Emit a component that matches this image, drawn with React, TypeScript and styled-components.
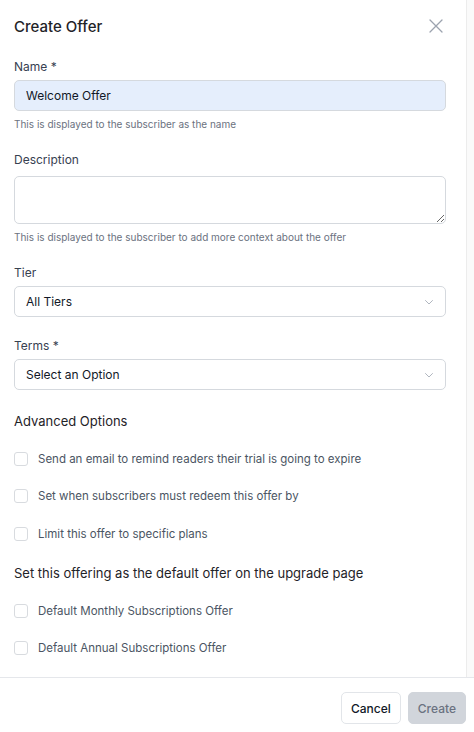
import { createGlobalStyle, styled } from "styled-components";

const GlobalStyle = createGlobalStyle`
  * { box-sizing: border-box; }
  html, body { margin: 0; padding: 0; background: #fff; }
  body {
    font-family: Inter, "Noto Sans", "Liberation Sans", sans-serif;
    color: #1f2328;
  }
`;

const Modal = styled.div`
  display: flex;
  flex-direction: column;
  width: 474px;
  height: 732px;
  background: #fff;
`;

const Main = styled.div`
  flex: 1;
  display: flex;
  min-height: 0;
`;

const Body = styled.div`
  flex: 1;
  overflow: hidden;
  padding: 14px 20px 0 14px;
`;

const ScrollTrack = styled.div`
  width: 8px;
  flex-shrink: 0;
  background: #fafafa;
  border-left: 1px solid #ececec;
`;

const Header = styled.div`
  display: flex;
  align-items: center;
  justify-content: space-between;
  height: 24px;
  margin-bottom: 21px;
`;

const Title = styled.h2`
  margin: 0;
  font-size: 15px;
  font-weight: 500;
  color: #1f2328;
`;

const CloseButton = styled.button`
  display: flex;
  align-items: center;
  justify-content: center;
  width: 24px;
  height: 24px;
  padding: 0;
  margin-right: -2px;
  border: none;
  background: none;
  color: #9ca3af;
  cursor: pointer;
`;

const Field = styled.div<{ $gap?: number }>`
  display: flex;
  flex-direction: column;
  margin-bottom: ${(p) => p.$gap ?? 21}px;
`;

const Label = styled.label`
  font-size: 12px;
  color: #374151;
  line-height: 16px;
  margin-bottom: 5px;
`;

const Input = styled.input<{ $filled?: boolean }>`
  height: 31px;
  padding: 0 11px;
  border: 1px solid #d5d9de;
  border-radius: 5px;
  background: ${(p) => (p.$filled ? "#e5eefc" : "#fff")};
  font-family: inherit;
  font-size: 12px;
  color: #111827;
  outline: none;
`;

const TextArea = styled.textarea`
  height: 48px;
  margin-top: 3px;
  padding: 8px 11px;
  border: 1px solid #d5d9de;
  border-radius: 5px;
  background: #fff;
  font-family: inherit;
  font-size: 12px;
  resize: vertical;
  outline: none;
`;

const Help = styled.p`
  margin: 6px 0 0;
  font-size: 10px;
  line-height: 14px;
  color: #6b7280;
`;

const SelectBox = styled.div`
  display: flex;
  align-items: center;
  justify-content: space-between;
  height: 31px;
  padding: 0 10px 0 11px;
  border: 1px solid #d5d9de;
  border-radius: 5px;
  background: #fff;
  font-size: 12px;
  color: #111827;
`;

const Chevron = styled.svg`
  width: 12px;
  height: 12px;
  color: #9ca3af;
`;

const SectionTitle = styled.h3`
  margin: 0 0 21px;
  font-size: 13px;
  font-weight: 400;
  line-height: 18px;
  color: #1f2328;
`;

const CheckList = styled.div`
  display: flex;
  flex-direction: column;
  gap: 21.3px;
  margin-bottom: 22px;
`;

const CheckRow = styled.label`
  display: flex;
  align-items: center;
  gap: 10px;
  font-size: 11.5px;
  line-height: 16px;
  color: #4b5563;
`;

const Box = styled.span`
  width: 14px;
  height: 14px;
  flex-shrink: 0;
  border: 1px solid #d8dbdf;
  border-radius: 3px;
  background: #fff;
`;

const Footer = styled.div`
  display: flex;
  justify-content: flex-end;
  gap: 7px;
  height: 55px;
  padding: 14px 8px 0 0;
  border-top: 1px solid #e5e7eb;
`;

const Button = styled.button<{ $primary?: boolean }>`
  height: 32px;
  padding: 0 9px;
  border-radius: 5px;
  border: 1px solid ${(p) => (p.$primary ? "#d1d5db" : "#e2e5e9")};
  background: ${(p) => (p.$primary ? "#d1d5db" : "#fff")};
  color: ${(p) => (p.$primary ? "#6b7280" : "#111827")};
  font-family: inherit;
  font-size: 12px;
  font-weight: 500;
  cursor: pointer;
`;

function ChevronDown() {
  return (
    <Chevron viewBox="0 0 24 24" fill="none" stroke="currentColor" strokeWidth="1.6">
      <path d="M5 9l7 7 7-7" strokeLinecap="round" strokeLinejoin="round" />
    </Chevron>
  );
}

const advanced = [
  "Send an email to remind readers their trial is going to expire",
  "Set when subscribers must redeem this offer by",
  "Limit this offer to specific plans",
];

const defaults = ["Default Monthly Subscriptions Offer", "Default Annual Subscriptions Offer"];

export default function App() {
  return (
    <>
      <GlobalStyle />
      <Modal>
        <Main>
          <Body>
            <Header>
              <Title>Create Offer</Title>
              <CloseButton aria-label="Close">
                <svg width="14" height="14" viewBox="0 0 14 14" fill="none" stroke="currentColor" strokeWidth="1.3">
                  <path d="M1 1l12 12M13 1L1 13" strokeLinecap="round" />
                </svg>
              </CloseButton>
            </Header>

            <Field>
              <Label>Name *</Label>
              <Input $filled defaultValue="Welcome Offer" />
              <Help>This is displayed to the subscriber as the name</Help>
            </Field>

            <Field>
              <Label>Description</Label>
              <TextArea />
              <Help>This is displayed to the subscriber to add more context about the offer</Help>
            </Field>

            <Field>
              <Label>Tier</Label>
              <SelectBox>
                All Tiers
                <ChevronDown />
              </SelectBox>
            </Field>

            <Field $gap={22}>
              <Label>Terms *</Label>
              <SelectBox>
                Select an Option
                <ChevronDown />
              </SelectBox>
            </Field>

            <SectionTitle>Advanced Options</SectionTitle>
            <CheckList>
              {advanced.map((text) => (
                <CheckRow key={text}>
                  <Box />
                  {text}
                </CheckRow>
              ))}
            </CheckList>

            <SectionTitle>Set this offering as the default offer on the upgrade page</SectionTitle>
            <CheckList>
              {defaults.map((text) => (
                <CheckRow key={text}>
                  <Box />
                  {text}
                </CheckRow>
              ))}
            </CheckList>
          </Body>
          <ScrollTrack />
        </Main>
        <Footer>
          <Button>Cancel</Button>
          <Button $primary>Create</Button>
        </Footer>
      </Modal>
    </>
  );
}
